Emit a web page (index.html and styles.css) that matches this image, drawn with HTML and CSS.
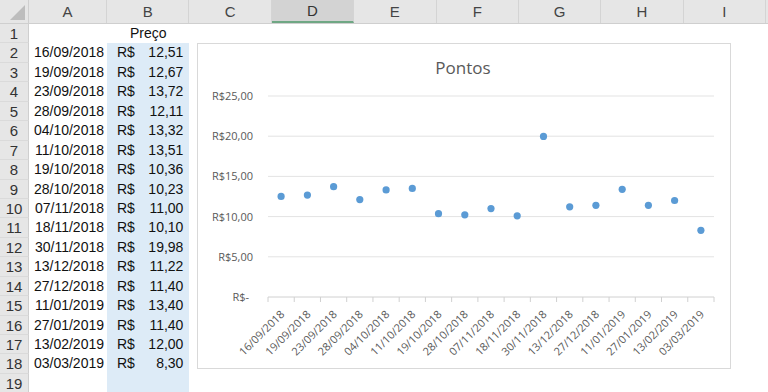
FILE: index.html
```html
<!DOCTYPE html>
<html lang="pt-BR">
<head>
  <meta charset="UTF-8" />
  <meta name="viewport" content="width=device-width, initial-scale=1.0" />
  <title>Pontos</title>
  <link rel="stylesheet" href="styles.css">
</head>
<body>
  <div class="sheet" id="sheet">
    <div class="row head-row">
      <div class="corner"><span class="tri"></span></div>
      <div class="col-head col-a">A</div>
      <div class="col-head col-b">B</div>
      <div class="col-head">C</div>
      <div class="col-head selected">D</div>
      <div class="col-head">E</div>
      <div class="col-head">F</div>
      <div class="col-head">G</div>
      <div class="col-head">H</div>
      <div class="col-head">I</div>
    </div>
    <div id="rows"></div>

    <div class="chart">
      <svg id="grafico" width="532" height="324" viewBox="0 0 532 324"></svg>
    </div>
  </div>

  <script>
    const datas = ["16/09/2018","19/09/2018","23/09/2018","28/09/2018","04/10/2018","11/10/2018","19/10/2018","28/10/2018","07/11/2018","18/11/2018","30/11/2018","13/12/2018","27/12/2018","11/01/2019","27/01/2019","13/02/2019","03/03/2019"];
    const precos = [12.51,12.67,13.72,12.11,13.32,13.51,10.36,10.23,11.00,10.10,19.98,11.22,11.40,13.40,11.40,12.00,8.30];

    // linhas da planilha (a 20 fica quase toda fora da tela)
    let html = "";
    for (let r = 1; r <= 20; r++) {
      let a = "", b = "";
      if (r === 1) {
        b = `<span class="titulo">Preço</span>`;
      } else if (r <= 18) {
        a = datas[r - 2];
        b = `<span>R$</span><span>${precos[r - 2].toFixed(2).replace(".", ",")}</span>`;
      }
      html += `
        <div class="row">
          <div class="row-head">${r < 20 ? r : ""}</div>
          <div class="cell col-a">${a}</div>
          <div class="cell col-b ${r > 1 ? "fill" : ""}">${b}</div>
          <div class="cell"></div><div class="cell"></div><div class="cell"></div>
          <div class="cell"></div><div class="cell"></div><div class="cell"></div><div class="cell"></div>
        </div>`;
    }
    document.getElementById("rows").innerHTML = html;

    // grafico de dispersao
    const x0 = 70, x1 = 516, y0 = 253, escala = 201 / 25;
    const passo = (x1 - x0) / precos.length;
    let svg = `<text class="chart-title" x="265" y="30" text-anchor="middle">Pontos</text>`;
    for (let v = 0; v <= 25; v += 5) {
      const y = y0 - v * escala;
      const rotulo = v === 0 ? "R$-" : "R$" + v + ",00";
      svg += `<line x1="${x0}" y1="${y}" x2="${x1}" y2="${y}" class="${v === 0 ? "axis" : "grid"}"/>`;
      svg += `<text class="tick" x="${v === 0 ? 51 : 55}" y="${y + 4}" text-anchor="end">${rotulo}</text>`;
    }
    for (let i = 0; i <= precos.length; i++) {
      const x = x0 + i * passo;
      svg += `<line x1="${x}" y1="${y0}" x2="${x}" y2="${y0 + 5}" class="axis"/>`;
    }
    precos.forEach((p, i) => {
      const cx = x0 + passo * (i + 0.5);
      svg += `<circle cx="${cx.toFixed(1)}" cy="${(y0 - p * escala).toFixed(1)}" r="3.6" class="ponto"/>`;
      svg += `<text class="tick" text-anchor="end" transform="translate(${(cx + 4).toFixed(1)},271) rotate(-45)">${datas[i]}</text>`;
    });
    document.getElementById("grafico").innerHTML = svg;
  </script>
</body>
</html>
```

FILE: styles.css
```css
body {
  margin: 0;
  background: #fff;
  font-family: "Liberation Sans", Arial, sans-serif;
  overflow: hidden;
}
.sheet {
  position: relative;
  width: 768px;
  height: 392px;
  overflow: hidden;
}
.row {
  display: flex;
  height: 19.45px;
}
.head-row {
  height: 24px;
  background: #e6e6e6;
  border-bottom: 1px solid #cfcfcf;
  box-sizing: border-box;
}
.corner {
  position: relative;
  width: 29px;
  flex: none;
  border-right: 1px solid #cfcfcf;
  box-sizing: border-box;
}
.tri {
  position: absolute;
  right: 3px;
  bottom: 3px;
  width: 0;
  height: 0;
  border-left: 15px solid transparent;
  border-bottom: 15px solid #bdbdbd;
}
.col-head {
  width: 82.4px;
  flex: none;
  box-sizing: border-box;
  border-right: 1px solid #d4d4d4;
  text-align: center;
  font-size: 15px;
  line-height: 23px;
  color: #444;
}
.col-head.col-a {
  width: 78px;
}
.col-head.selected {
  background: #d3d3d3;
  border-bottom: 2px solid #6fa784;
  line-height: 22px;
  color: #333;
}
.row-head {
  width: 29px;
  flex: none;
  box-sizing: border-box;
  background: #e6e6e6;
  border-right: 1px solid #cfcfcf;
  border-bottom: 1px solid #dadada;
  text-align: center;
  font-size: 15px;
  line-height: 19px;
  color: #333;
}
.cell {
  width: 82.4px;
  flex: none;
  font-size: 14px;
  line-height: 19.45px;
  color: #111;
  white-space: nowrap;
}
.cell.col-a {
  width: 78px;
  text-align: right;
  padding-right: 3px;
  box-sizing: border-box;
}
.cell.col-b {
  display: flex;
  justify-content: space-between;
  padding: 0 6px 0 10px;
  box-sizing: border-box;
}
.cell.fill {
  background: #ddebf7;
}
.titulo {
  width: 100%;
  text-align: center;
  padding-right: 4px;
}
.chart {
  position: absolute;
  left: 197px;
  top: 43px;
  width: 534px;
  height: 326px;
  box-sizing: border-box;
  border: 1px solid #d9d9d9;
  background: #fff;
}
.chart svg {
  display: block;
}
.chart-title {
  font-family: "Open Sans", sans-serif;
  font-size: 17px;
  fill: #595959;
}
.tick {
  font-family: "Open Sans", sans-serif;
  font-size: 11px;
  fill: #595959;
}
.grid {
  stroke: #e3e3e3;
  stroke-width: 1;
}
.axis {
  stroke: #d0d0d0;
  stroke-width: 1;
}
.ponto {
  fill: #5b9bd5;
}
```
